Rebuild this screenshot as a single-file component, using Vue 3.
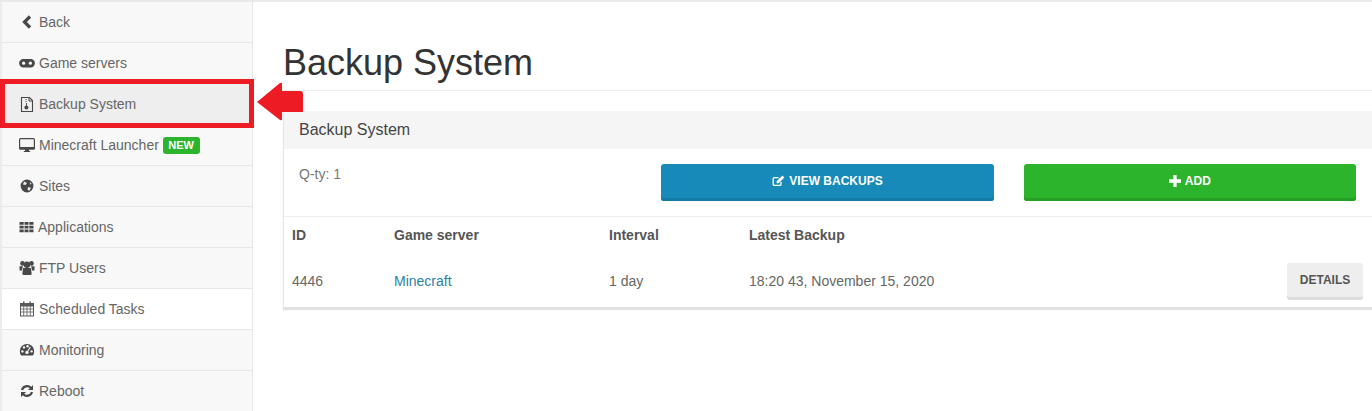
<template>
  <div class="page">
    <aside class="sidebar">
      <a v-for="item in menu" :key="item.label" class="menu-item" :class="{ active: item.active, plain: item.plain, back: item.back }">
        <svg class="menu-icon" :style="{ width: item.w + 'px' }" :viewBox="`0 0 ${item.w} 16`" v-html="item.icon"></svg>
        <span>{{ item.label }}</span>
        <span v-if="item.badge" class="badge">{{ item.badge }}</span>
      </a>
      <!-- annotation from the screenshot -->
      <div class="callout-box"></div>
    </aside>

    <main class="content">
      <h1 class="title">Backup System</h1>
      <section class="card">
        <div class="card-head">Backup System</div>
        <div class="toolbar">
          <div class="qty">Q-ty: 1</div>
          <button class="btn btn-blue">
            <svg width="13" height="12" viewBox="0 0 13 12"><path d="M9 7v2.200c0 .7-.5 1.200-1.200 1.200H2.400c-.7 0-1.200-.5-1.200-1.200V3.800c0-.7.5-1.200 1.200-1.200h4.200" fill="none" stroke="#fff" stroke-width="1.300"/><path d="M4.600 6.300 10.400.6l2 2-5.800 5.700H4.600z" fill="#fff"/></svg>
            VIEW BACKUPS
          </button>
          <button class="btn btn-green">
            <svg width="12" height="12" viewBox="0 0 11 11"><path d="M4 0h3v4h4v3H7v4H4V7H0V4h4z" fill="#fff"/></svg>
            ADD
          </button>
        </div>
        <table class="table">
          <thead>
            <tr>
              <th class="c-id">ID</th>
              <th class="c-server">Game server</th>
              <th class="c-interval">Interval</th>
              <th>Latest Backup</th>
              <th class="c-action"></th>
            </tr>
          </thead>
          <tbody>
            <tr v-for="row in rows" :key="row.id">
              <td>{{ row.id }}</td>
              <td><a class="link">{{ row.server }}</a></td>
              <td>{{ row.interval }}</td>
              <td>{{ row.latest }}</td>
              <td class="action-cell"><button class="btn-details">DETAILS</button></td>
            </tr>
          </tbody>
        </table>
      </section>
    </main>

    <svg class="callout-arrow" width="46" height="40" viewBox="0 0 46 40"><path d="M0 20 23 1q2-1 2 1v7h18q3 0 3 3v18H25v7q0 2-2 1z" fill="#ed1c24"/></svg>
  </div>
</template>

<script setup>
const c = '#484848'
const menu = [
  { label: 'Back', w: 16, back: true, icon: `<path d="M11 2.500 5.500 8l5.500 5.500" fill="none" stroke="${c}" stroke-width="3.200"/>` },
  { label: 'Game servers', w: 16, icon: `<path d="M4.300 4h7.400a4.200 4.200 0 0 1 0 8.400H4.300a4.200 4.200 0 0 1 0-8.400z" fill="${c}"/><circle cx="4.600" cy="8.200" r="1.600" fill="#f8f8f8"/><circle cx="11.400" cy="8.200" r="1.600" fill="#f8f8f8"/>` },
  { label: 'Backup System', w: 16, active: true, icon: `<path d="M2.500 1.500h8l3 3v11h-11z" fill="none" stroke="${c}" stroke-width="1.100"/><path d="M10 1.500v3.500h3.500" fill="none" stroke="${c}"/><path d="M7 3v4" stroke="${c}" stroke-dasharray="1 1"/><circle cx="7.400" cy="11.600" r="2" fill="${c}"/><path d="M7 7h.9v3H7z" fill="${c}"/>` },
  { label: 'Minecraft Launcher', w: 16, badge: 'NEW', icon: `<rect x=".6" y="1.600" width="14.800" height="10.400" rx="1" fill="#f4f4f4" stroke="${c}" stroke-width="1.200"/><path d="M.5 10h15v2.400H.5zM6 12.400h4v1.600h1.200v1H4.800v-1H6z" fill="${c}"/>` },
  { label: 'Sites', w: 16, icon: `<circle cx="8" cy="8" r="6.400" fill="${c}"/><path d="M5 3.600 8 5 6.600 7 4 6.600zM9 9l3 .8-1.600 3-1.800-.8zM11 4l1.600 2-1.600.4z" fill="#eee"/>` },
  { label: 'Applications', w: 15, icon: `<path d="M.5 3h4.200v2.800H.5zM5.500 3h4v2.800h-4zM10.300 3h4.200v2.800h-4.200zM.5 6.700h4.200v2.800H.5zM5.500 6.700h4v2.800h-4zM10.300 6.700h4.200v2.800h-4.200zM.5 10.400h4.200v2.800H.5zM5.500 10.400h4v2.800h-4zM10.300 10.400h4.200v2.800h-4.200z" fill="${c}"/>` },
  { label: 'FTP Users', w: 16, icon: `<circle cx="3.500" cy="3.400" r="2.300" fill="${c}"/><circle cx="12.500" cy="3.400" r="2.300" fill="${c}"/><circle cx="8" cy="4.800" r="3.200" fill="${c}"/><path d="M.5 6.200h3.400L3 10.500H.5zM15.500 6.200h-3.400l.9 4.300h2.500zM4.200 8h7.600l.9 5.500q0 1.500-1.500 1.500H4.800q-1.500 0-1.500-1.500z" fill="${c}"/>` },
  { label: 'Scheduled Tasks', w: 16, plain: true, icon: `<rect x="1.500" y="2.500" width="13" height="12.500" fill="none" stroke="#5a5a5a"/><path d="M1.500 2.500h13v3h-13zM4 .6h1.500v3H4zM10.500 .6H12v3h-1.500z" fill="#5a5a5a"/><path d="M1.500 8h13M1.500 11h13M4.700 5v10M8 5v10M11.300 5v10" stroke="#5a5a5a" stroke-width=".8"/>` },
  { label: 'Monitoring', w: 16, icon: `<path d="M8 2a7.200 7.200 0 0 1 7.200 7.200q0 2.400-1.400 4.400H2.200A7.200 7.200 0 0 1 .8 9.200 7.200 7.200 0 0 1 8 2z" fill="${c}"/><circle cx="3.400" cy="9.400" r="1.200" fill="#f8f8f8"/><circle cx="5" cy="5.400" r="1.200" fill="#f8f8f8"/><circle cx="8.600" cy="4.200" r="1.200" fill="#f8f8f8"/><circle cx="12.600" cy="9.400" r="1.200" fill="#f8f8f8"/><path d="M11.400 5 8.800 9" stroke="#f8f8f8" stroke-width="1.200"/><circle cx="8" cy="10.400" r="1.700" fill="#f8f8f8"/>` },
  { label: 'Reboot', w: 16, icon: `<path d="M3 7a5.200 5.200 0 0 1 8.800-2.200" fill="none" stroke="${c}" stroke-width="2.200"/><path d="M14 2v5H9zM2 14V9h5z" fill="${c}"/><path d="M13 9a5.200 5.200 0 0 1-8.800 2.200" fill="none" stroke="${c}" stroke-width="2.200"/>` }
]

const rows = [
  { id: 4446, server: 'Minecraft', interval: '1 day', latest: '18:20 43, November 15, 2020' }
]
</script>

<style scoped>
.page {
  position: relative;
  display: flex;
  height: 411px;
  overflow: hidden;
  border-top: 2px solid #e9e9e9;
  box-sizing: border-box;
  font-family: "Liberation Sans", Arial, sans-serif;
  font-size: 14px;
  color: #555;
  background: #fff;
}

.sidebar {
  position: relative;
  flex: 0 0 253px;
  box-sizing: border-box;
  border-left: 2px solid #ececec;
  border-right: 1px solid #e7e7e7;
  background: #f8f8f8;
}

.menu-item {
  display: flex;
  align-items: center;
  height: 41px;
  box-sizing: border-box;
  padding: 0 0 0 17px;
  border-bottom: 1px solid #e7e7e7;
  color: #666;
  white-space: nowrap;
}

.menu-item.plain { background: #fff; }
.menu-item.active { background: #eee; }

.menu-icon {
  height: 16px;
  margin-right: 4px;
  flex: none;
}

.badge {
  margin-left: 4px;
  padding: 1px 5.500px;
  height: 15px;
  line-height: 15px;
  border-radius: 3px;
  background: #2bb42c;
  color: #fff;
  font-size: 11px;
  font-weight: bold;
}

.callout-box {
  position: absolute;
  left: -2px;
  top: 77px;
  width: 254px;
  height: 49px;
  box-sizing: border-box;
  border: 5px solid #ed1c24;
}

.callout-arrow {
  position: absolute;
  left: 257px;
  top: 80px;
}

.content {
  flex: 1;
  min-width: 0;
  padding-left: 30px;
}

.title {
  margin: 0;
  height: 89px;
  padding-top: 41px;
  box-sizing: border-box;
  border-bottom: 1px solid #eee;
  font-size: 36px;
  font-weight: 400;
  line-height: 40px;
  color: #333;
}

.card {
  margin-top: 20px;
  height: 196px;
  border-left: 1px solid #e6e6e6;
  box-shadow: 0 3px 1px #e2e2e2;
}

.card-head {
  height: 38px;
  line-height: 38px;
  padding-left: 15px;
  background: #f5f5f5;
  font-size: 16px;
  color: #444;
}

.toolbar {
  display: grid;
  grid-template-columns: repeat(3, 1fr);
  gap: 30px;
  height: 68px;
  box-sizing: border-box;
  padding: 15px 16px 0 15px;
  border-bottom: 1px solid #eee;
}

.qty {
  line-height: 21px;
  color: #777;
}

.btn {
  height: 37px;
  padding: 0 0 4px;
  border: 0;
  border-radius: 3px;
  color: #fff;
  font-family: inherit;
  font-size: 12px;
  font-weight: bold;
  display: flex;
  align-items: center;
  justify-content: center;
  gap: 4px;
}

.btn-blue {
  background: #178ab9;
  box-shadow: inset 0 -3px 0 #147aa4;
}

.btn-green {
  background: #2bb42c;
  box-shadow: inset 0 -3px 0 #269f27;
}

.table {
  width: 100%;
  table-layout: fixed;
  border-collapse: collapse;
}

.table th {
  height: 36px;
  padding: 0 8px;
  text-align: left;
  font-weight: bold;
  color: #555;
}

.table td {
  height: 56px;
  padding: 0 8px;
  color: #666;
}

.c-id { width: 86px; }
.c-server { width: 199px; }
.c-interval { width: 124px; }
.c-action { width: 77px; }

.link { color: #2c7fa8; }

.action-cell { text-align: right; }

.btn-details {
  display: block;
  width: 76px;
  height: 37px;
  padding: 0 0 3px;
  border: 0;
  border-radius: 3px;
  background: #eee;
  box-shadow: inset 0 -3px 0 #ddd;
  color: #555;
  font-family: inherit;
  font-size: 12px;
  font-weight: bold;
}
</style>
